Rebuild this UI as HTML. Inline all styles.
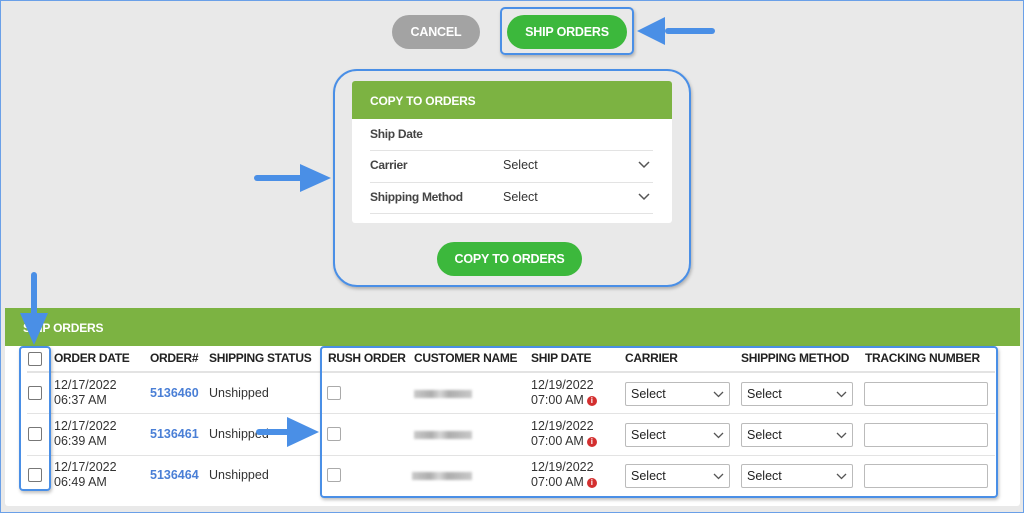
<!DOCTYPE html>
<html><head><style>
*{box-sizing:border-box;margin:0;padding:0}
body{width:1024px;height:513px;background:#e9e9e9;font-family:"Liberation Sans",Arial,sans-serif;position:relative;overflow:hidden;color:#333;font-size:12.5px}
.a{position:absolute}
.btn{position:absolute;border-radius:17px;color:#fff;font-weight:bold;font-size:12.5px;text-align:center;letter-spacing:-0.2px}
.bl{position:absolute;border:2.5px solid #4a8fe6;box-shadow:1px 2px 3px rgba(0,0,0,.25)}
.line{position:absolute;height:1px;background:#e3e3e3}
.hd{font-weight:bold;color:#222;font-size:12px;letter-spacing:-0.3px}
.cb{position:absolute;width:14px;height:14px;border:1.5px solid #777;border-radius:2px;background:#fff}
.cb2{position:absolute;width:14px;height:14px;border:1px solid #aaa;border-radius:2px;background:#fff}
.sel{position:absolute;height:24px;border:1px solid #bbb;border-radius:2px;background:#fff;padding:4px 5px;font-size:12.5px;color:#222}
.sel svg{position:absolute;right:5px;top:8px}
.blur{position:absolute;height:8px;background:linear-gradient(90deg,#bbb,#999 30%,#ccc 45%,#999 60%,#bbb);filter:blur(1.2px);opacity:.8}
.info{display:inline-block;width:10px;height:10px;border-radius:50%;background:#d32f2f;color:#fff;font-size:8px;line-height:10px;text-align:center;font-weight:bold;vertical-align:1px;margin-left:3px}
</style></head><body>
<div class="a" style="left:0;top:0;width:1024px;height:513px;border:1px solid #6aa0e8"></div>

<div class="btn" style="left:392px;top:15px;width:88px;height:34px;line-height:34px;background:#a3a3a3">CANCEL</div>
<div class="btn" style="left:507px;top:15px;width:120px;height:34px;line-height:34px;background:#3cb83c">SHIP ORDERS</div>
<div class="bl" style="left:500px;top:7px;width:134px;height:48px;border-radius:5px"></div>
<svg class="a" style="left:634px;top:14px" width="84" height="36"><path d="M78 17 H34" stroke="#4a8fe6" stroke-width="6" stroke-linecap="round"/><path d="M3 17 L31 3 V31 Z" fill="#4a8fe6"/></svg>

<div class="bl" style="left:333px;top:69px;width:358px;height:218px;border-radius:24px"></div>
<div class="a" style="left:352px;top:81px;width:320px;height:142px;background:#fff;border-radius:3px"></div>
<div class="a" style="left:352px;top:81px;width:320px;height:38px;background:#7cb342;border-radius:3px 3px 0 0;color:#fff;font-weight:bold;padding:13px 18px;font-size:12px;letter-spacing:-0.2px">COPY TO ORDERS</div>
<div class="a hd" style="left:370px;top:127px;color:#444">Ship Date</div>
<div class="line" style="left:370px;top:150px;width:283px"></div>
<div class="a hd" style="left:370px;top:158px;color:#444">Carrier</div>
<div class="a" style="left:503px;top:158px">Select</div>
<svg class="a" style="left:638px;top:161px" width="12" height="8"><path d="M1 1 L6 6 L11 1" stroke="#555" stroke-width="1.5" fill="none"/></svg>
<div class="line" style="left:370px;top:182px;width:283px"></div>
<div class="a hd" style="left:370px;top:190px;color:#444">Shipping Method</div>
<div class="a" style="left:503px;top:190px">Select</div>
<svg class="a" style="left:638px;top:193px" width="12" height="8"><path d="M1 1 L6 6 L11 1" stroke="#555" stroke-width="1.5" fill="none"/></svg>
<div class="line" style="left:370px;top:213px;width:283px"></div>
<div class="btn" style="left:437px;top:242px;width:145px;height:34px;line-height:34px;background:#3cb83c">COPY TO ORDERS</div>
<svg class="a" style="left:250px;top:160px" width="84" height="36"><path d="M7 18 H52" stroke="#4a8fe6" stroke-width="6" stroke-linecap="round"/><path d="M81 18 L50 4 V32 Z" fill="#4a8fe6"/></svg>

<div class="a" style="left:5px;top:308px;width:1015px;height:198px;background:#fff;border-radius:3px"></div>
<div class="a" style="left:5px;top:308px;width:1015px;height:38px;background:#7cb342;color:#fff;font-weight:bold;padding:13px 18px;font-size:12px;letter-spacing:-0.2px">SHIP ORDERS</div>

<div class="cb" style="left:28px;top:352px"></div>
<div class="a hd" style="left:54px;top:351px">ORDER DATE</div>
<div class="a hd" style="left:150px;top:351px">ORDER#</div>
<div class="a hd" style="left:209px;top:351px">SHIPPING STATUS</div>
<div class="a hd" style="left:328px;top:351px">RUSH ORDER</div>
<div class="a hd" style="left:414px;top:351px">CUSTOMER NAME</div>
<div class="a hd" style="left:531px;top:351px">SHIP DATE</div>
<div class="a hd" style="left:625px;top:351px">CARRIER</div>
<div class="a hd" style="left:741px;top:351px">SHIPPING METHOD</div>
<div class="a hd" style="left:865px;top:351px">TRACKING NUMBER</div>
<div class="line" style="left:27px;top:371px;width:968px;height:2px"></div>

<div class="cb" style="left:28px;top:386px"></div>
<div class="a" style="left:54px;top:378px;line-height:15px">12/17/2022<br>06:37 AM</div>
<div class="a" style="left:150px;top:386px;color:#4a7fd6;font-weight:bold">5136460</div>
<div class="a" style="left:209px;top:386px">Unshipped</div>
<div class="cb2" style="left:327px;top:386px"></div>
<div class="blur" style="left:414px;top:390px;width:58px"></div>
<div class="a" style="left:531px;top:378px;line-height:15px">12/19/2022<br>07:00 AM<span class="info">i</span></div>
<div class="sel" style="left:625px;top:382px;width:105px">Select<svg width="11" height="7"><path d="M1 1 L5.5 5.5 L10 1" stroke="#555" stroke-width="1.3" fill="none"/></svg></div>
<div class="sel" style="left:741px;top:382px;width:112px">Select<svg width="11" height="7"><path d="M1 1 L5.5 5.5 L10 1" stroke="#555" stroke-width="1.3" fill="none"/></svg></div>
<div class="sel" style="left:864px;top:382px;width:124px"></div>
<div class="line" style="left:27px;top:413px;width:968px"></div>

<div class="cb" style="left:28px;top:427px"></div>
<div class="a" style="left:54px;top:419px;line-height:15px">12/17/2022<br>06:39 AM</div>
<div class="a" style="left:150px;top:427px;color:#4a7fd6;font-weight:bold">5136461</div>
<div class="a" style="left:209px;top:427px">Unshipped</div>
<div class="cb2" style="left:327px;top:427px"></div>
<div class="blur" style="left:414px;top:431px;width:58px"></div>
<div class="a" style="left:531px;top:419px;line-height:15px">12/19/2022<br>07:00 AM<span class="info">i</span></div>
<div class="sel" style="left:625px;top:423px;width:105px">Select<svg width="11" height="7"><path d="M1 1 L5.5 5.5 L10 1" stroke="#555" stroke-width="1.3" fill="none"/></svg></div>
<div class="sel" style="left:741px;top:423px;width:112px">Select<svg width="11" height="7"><path d="M1 1 L5.5 5.5 L10 1" stroke="#555" stroke-width="1.3" fill="none"/></svg></div>
<div class="sel" style="left:864px;top:423px;width:124px"></div>
<div class="line" style="left:27px;top:455px;width:968px"></div>

<div class="cb" style="left:28px;top:468px"></div>
<div class="a" style="left:54px;top:460px;line-height:15px">12/17/2022<br>06:49 AM</div>
<div class="a" style="left:150px;top:468px;color:#4a7fd6;font-weight:bold">5136464</div>
<div class="a" style="left:209px;top:468px">Unshipped</div>
<div class="cb2" style="left:327px;top:468px"></div>
<div class="blur" style="left:412px;top:472px;width:60px"></div>
<div class="a" style="left:531px;top:460px;line-height:15px">12/19/2022<br>07:00 AM<span class="info">i</span></div>
<div class="sel" style="left:625px;top:464px;width:105px">Select<svg width="11" height="7"><path d="M1 1 L5.5 5.5 L10 1" stroke="#555" stroke-width="1.3" fill="none"/></svg></div>
<div class="sel" style="left:741px;top:464px;width:112px">Select<svg width="11" height="7"><path d="M1 1 L5.5 5.5 L10 1" stroke="#555" stroke-width="1.3" fill="none"/></svg></div>
<div class="sel" style="left:864px;top:464px;width:124px"></div>

<div class="bl" style="left:19px;top:346px;width:32px;height:145px;border-radius:4px"></div>
<div class="bl" style="left:320px;top:346px;width:678px;height:152px;border-radius:4px"></div>
<svg class="a" style="left:18px;top:270px" width="34" height="78"><path d="M16 5 V44" stroke="#4a8fe6" stroke-width="6" stroke-linecap="round"/><path d="M16 75 L2 43 H30 Z" fill="#4a8fe6"/></svg>
<svg class="a" style="left:252px;top:412px" width="70" height="40"><path d="M7 20 H38" stroke="#4a8fe6" stroke-width="6" stroke-linecap="round"/><path d="M67 20 L35 5 V35 Z" fill="#4a8fe6"/></svg>
</body></html>
